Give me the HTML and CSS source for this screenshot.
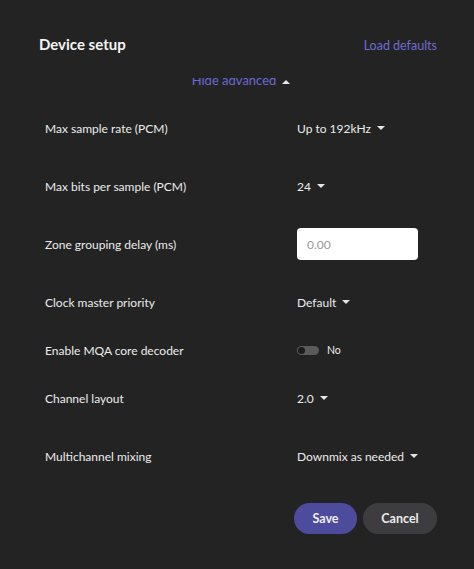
FILE: index.html
```html
<!DOCTYPE html>
<html lang="en">
<head>
<meta charset="utf-8">
<title>Device setup</title>
<link rel="stylesheet" href="styles.css">
</head>
<body>
<div class="dialog">
  <header class="header">
    <h1 class="title">Device setup</h1>
    <a class="link">Load defaults</a>
  </header>
  <div class="scroller">
    <div class="content">
      <div class="toggle-adv"><span class="link adv">Hide advanced</span><span class="caret-up"></span></div>
      <div class="row"><span class="label">Max sample rate (PCM)</span><span class="value">Up to 192kHz <span class="caret"></span></span></div>
      <div class="row"><span class="label">Max bits per sample (PCM)</span><span class="value">24 <span class="caret"></span></span></div>
      <div class="row"><span class="label">Zone grouping delay (ms)</span><span class="value"><span class="input">0.00</span></span></div>
      <div class="row"><span class="label">Clock master priority</span><span class="value">Default <span class="caret"></span></span></div>
      <div class="row row-short"><span class="label">Enable MQA core decoder</span><span class="value"><span class="switch"><span class="knob"></span></span><span class="switch-text">No</span></span></div>
      <div class="row"><span class="label">Channel layout</span><span class="value">2.0 <span class="caret"></span></span></div>
      <div class="row"><span class="label">Multichannel mixing</span><span class="value">Downmix as needed <span class="caret"></span></span></div>
    </div>
  </div>
  <footer class="footer">
    <button class="btn btn-primary">Save</button>
    <button class="btn btn-secondary">Cancel</button>
  </footer>
</div>
</body>
</html>
```

FILE: styles.css
```css
html, body {
  margin: 0;
  padding: 0;
  background: #232323;
}
body {
  font-family: Lato, "Open Sans", sans-serif;
  color: #ececec;
  width: 474px;
  height: 569px;
  overflow: hidden;
}
.dialog {
  display: flex;
  flex-direction: column;
  height: 569px;
}
.header {
  display: flex;
  justify-content: space-between;
  align-items: center;
  height: 78px;
  padding: 0 37px 0 39px;
  box-sizing: border-box;
  flex: none;
}
.title {
  margin: 0;
  font-size: 15px;
  font-weight: 700;
  color: #f4f4f4;
  position: relative;
  top: 5px;
}
.link {
  color: #6d6cd0;
  font-size: 12.5px;
  cursor: pointer;
}
.header .link {
  position: relative;
  top: 6px;
}
.scroller {
  height: 410px;
  overflow: hidden;
  flex: none;
}
.content {
  margin-top: -6px;
  padding: 0 37px 0 45px;
}
.toggle-adv {
  display: flex;
  justify-content: center;
  align-items: flex-start;
  gap: 6px;
  height: 27px;
}
.adv {
  font-size: 13px;
  font-weight: 400;
  color: #6a69d2;
  line-height: 16px;
}
.caret-up {
  width: 0;
  height: 0;
  margin-top: 8px;
  border-left: 4px solid transparent;
  border-right: 4px solid transparent;
  border-bottom: 4px solid #e8e8e8;
}
.row {
  display: grid;
  grid-template-columns: 252px 1fr;
  align-items: center;
  height: 58px;
  font-size: 12px;
}
.row-short {
  height: 38px;
}
.label {
  color: #ececec;
}
.value {
  display: flex;
  align-items: center;
  gap: 5px;
  color: #ececec;
}
.caret {
  display: inline-block;
  width: 0;
  height: 0;
  border-left: 4px solid transparent;
  border-right: 4px solid transparent;
  border-top: 4px solid #e6e6e6;
  margin-left: 1px;
}
.input {
  display: flex;
  align-items: center;
  width: 121px;
  height: 32px;
  box-sizing: border-box;
  padding-left: 10px;
  background: #ffffff;
  border-radius: 4px;
  color: #9a9a9a;
  font-size: 12px;
}
.switch {
  position: relative;
  width: 22px;
  height: 9px;
  border-radius: 5px;
  background: #5a5a5a;
}
.knob {
  position: absolute;
  left: 1px;
  top: 1px;
  width: 7px;
  height: 7px;
  border-radius: 50%;
  background: #1c1c1c;
}
.switch-text {
  font-size: 10.5px;
  margin-left: 3px;
  color: #ececec;
}
.footer {
  display: flex;
  justify-content: flex-end;
  align-items: flex-start;
  gap: 6px;
  padding: 15px 37px 0 0;
}
.btn {
  font-family: Lato, "Open Sans", sans-serif;
  font-size: 12.5px;
  font-weight: 700;
  height: 31px;
  border: none;
  border-radius: 16px;
  color: #ececec;
  cursor: pointer;
}
.btn-primary {
  width: 63px;
  background: #4d4b9c;
}
.btn-secondary {
  width: 74px;
  background: #3d3d3f;
}
```
